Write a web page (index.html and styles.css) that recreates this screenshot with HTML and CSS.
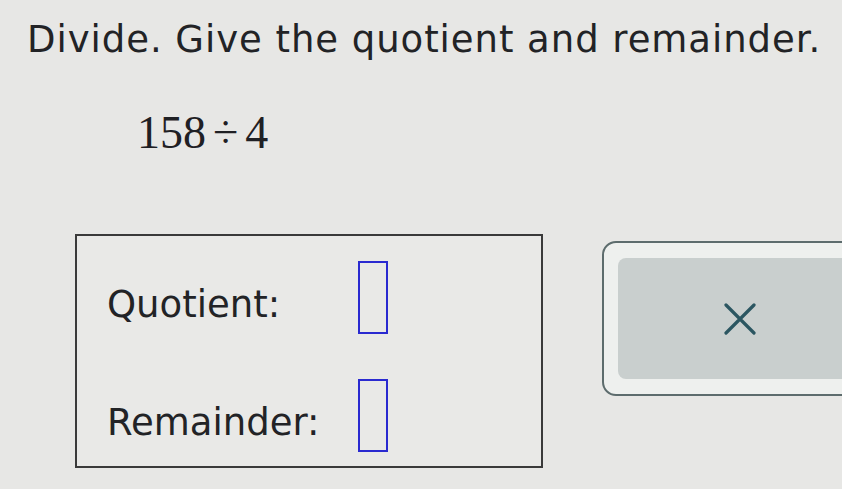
FILE: index.html
```html
<!DOCTYPE html>
<html>
<head>
<meta charset="utf-8">
<link rel="stylesheet" href="styles.css">
</head>
<body>
<div class="page">
  <h1 class="title">Divide. Give the quotient and remainder.</h1>
  <div class="expr">158<span class="op">÷</span>4</div>
  <div class="work">
    <div class="answers">
      <div class="label">Quotient:</div>
      <div class="input"></div>
      <div class="label">Remainder:</div>
      <div class="input"></div>
    </div>
    <div class="tools">
      <div class="tool-inner">
        <svg class="x-icon" width="34" height="32" viewBox="0 0 34 32">
          <path d="M3 2 L31 30 M31 2 L3 30" stroke="#2b5661" stroke-width="3.2" stroke-linecap="round" fill="none"/>
        </svg>
      </div>
    </div>
  </div>
</div>
</body>
</html>
```

FILE: styles.css
```css
html, body {
  margin: 0;
  padding: 0;
  background: #e7e7e5;
  overflow: hidden;
}
.page {
  width: 842px;
  height: 489px;
  overflow: hidden;
  color: #222326;
  font-family: "DejaVu Sans", Verdana, sans-serif;
}
.title {
  margin: 21px 0 0 27px;
  font-size: 37px;
  line-height: 37px;
  font-weight: normal;
  letter-spacing: 0.95px;
  white-space: nowrap;
}
.expr {
  margin: 52px 0 0 137px;
  font-family: "Liberation Serif", "Times New Roman", serif;
  font-size: 46px;
  line-height: 46px;
  color: #1f2024;
}
.op {
  margin: 0 7px;
}
.work {
  display: flex;
  align-items: flex-start;
  margin: 78px 0 0 75px;
  gap: 59px;
}
.answers {
  flex: none;
  box-sizing: border-box;
  width: 468px;
  height: 234px;
  border: 2px solid #3a3a3a;
  padding: 25px 0 0 30px;
  display: grid;
  grid-template-columns: 251px 30px;
  row-gap: 45px;
  align-items: end;
  align-content: start;
  background: #e9e9e7;
}
.label {
  font-size: 37px;
  line-height: 37px;
  margin-bottom: 11px;
  white-space: nowrap;
}
.input {
  box-sizing: border-box;
  width: 30px;
  height: 73px;
  border: 2px solid #2a2ad0;
}
.tools {
  flex: none;
  box-sizing: border-box;
  width: 300px;
  margin-top: 7px;
  border: 2px solid #5d6c6d;
  border-radius: 14px;
  background: #eef0ee;
  padding: 15px 14px 15px 14px;
}
.tool-inner {
  height: 121px;
  border-radius: 8px;
  background: #c9cfce;
  display: flex;
  align-items: center;
  padding-left: 105px;
}
.x-icon {
  display: block;
}
```
